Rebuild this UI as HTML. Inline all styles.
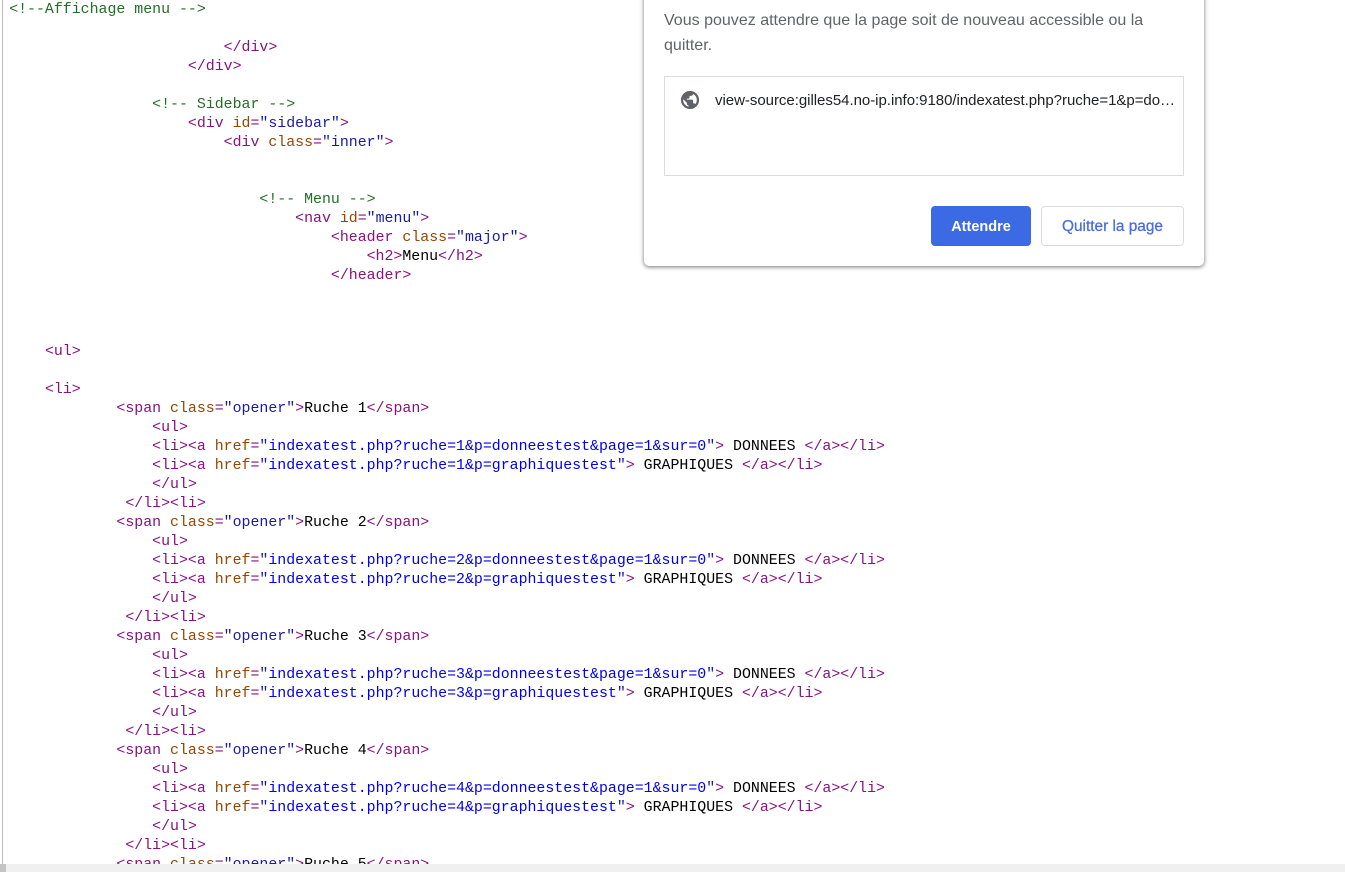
<!DOCTYPE html>
<html lang="fr">
<head>
<meta charset="utf-8">
<title>view-source</title>
<style>
html,body{margin:0;padding:0;width:1345px;height:872px;overflow:hidden;background:#fff}
#src{position:absolute;left:9.2px;top:1px;margin:0;font:14.9px/19px "Liberation Mono",monospace;color:#000;white-space:pre;}
.t{color:#881280}.a{color:#994500}.v{color:#1a1aa6}.c{color:#236e25}.l{color:#00e}
#gutter{position:absolute;left:2px;top:0;width:1px;height:864px;background:#bbb}
#sb{position:absolute;left:0;top:864px;width:1345px;height:8px;background:#f0f0f0}
#th{position:absolute;left:0;top:0;width:6px;height:8px;background:#c4c4c4}
#dlg{position:absolute;left:644px;top:-20px;width:560px;height:286px;background:#fff;border-radius:5px;box-shadow:0 1px 3px rgba(60,64,67,.55),0 1px 5px 1px rgba(60,64,67,.2);font-family:"Liberation Sans",sans-serif}
#msg{position:absolute;left:20px;top:28px;width:530px;font-size:16px;letter-spacing:.01px;line-height:25px;color:#5f6368;white-space:nowrap}
#box{position:absolute;left:20px;top:96px;width:518px;height:98px;border:1px solid #dadce0}
#box svg{position:absolute;left:16px;top:14px}
#url{position:absolute;left:50px;top:14px;width:465px;font-size:15px;line-height:20px;color:#202124;white-space:nowrap;overflow:hidden;letter-spacing:-.03px}
.b{position:absolute;top:226px;height:40px;box-sizing:border-box;border-radius:4px;font-size:14.5px;font-weight:bold;line-height:42px;text-align:center}
#w{left:287px;width:100px;background:#3c6ae4;color:#fff}
#q{left:397px;width:143px;border:1px solid #dadce0;line-height:40px;font-size:15.4px;color:#4a6ee0;font-weight:normal;-webkit-text-stroke:.3px #4a6ee0}
</style>
</head>
<body>
<pre id="src"><span class="c">&lt;!--Affichage menu --&gt;</span>

                        <span class="t">&lt;/div&gt;</span>
                    <span class="t">&lt;/div&gt;</span>

                <span class="c">&lt;!-- Sidebar --&gt;</span>
                    <span class="t">&lt;div <span class="a">id</span>=<span class="v">"sidebar"</span>&gt;</span>
                        <span class="t">&lt;div <span class="a">class</span>=<span class="v">"inner"</span>&gt;</span>


                            <span class="c">&lt;!-- Menu --&gt;</span>
                                <span class="t">&lt;nav <span class="a">id</span>=<span class="v">"menu"</span>&gt;</span>
                                    <span class="t">&lt;header <span class="a">class</span>=<span class="v">"major"</span>&gt;</span>
                                        <span class="t">&lt;h2&gt;</span>Menu<span class="t">&lt;/h2&gt;</span>
                                    <span class="t">&lt;/header&gt;</span>



    <span class="t">&lt;ul&gt;</span>

    <span class="t">&lt;li&gt;</span>
            <span class="t">&lt;span <span class="a">class</span>=<span class="v">"opener"</span>&gt;</span>Ruche 1<span class="t">&lt;/span&gt;</span>
                <span class="t">&lt;ul&gt;</span>
                <span class="t">&lt;li&gt;</span><span class="t">&lt;a <span class="a">href</span>=<span class="v">"<span class="l">indexatest.php?ruche=1&amp;p=donneestest&amp;page=1&amp;sur=0</span>"</span>&gt;</span> DONNEES <span class="t">&lt;/a&gt;</span><span class="t">&lt;/li&gt;</span>
                <span class="t">&lt;li&gt;</span><span class="t">&lt;a <span class="a">href</span>=<span class="v">"<span class="l">indexatest.php?ruche=1&amp;p=graphiquestest</span>"</span>&gt;</span> GRAPHIQUES <span class="t">&lt;/a&gt;</span><span class="t">&lt;/li&gt;</span>
                <span class="t">&lt;/ul&gt;</span>
             <span class="t">&lt;/li&gt;</span><span class="t">&lt;li&gt;</span>
            <span class="t">&lt;span <span class="a">class</span>=<span class="v">"opener"</span>&gt;</span>Ruche 2<span class="t">&lt;/span&gt;</span>
                <span class="t">&lt;ul&gt;</span>
                <span class="t">&lt;li&gt;</span><span class="t">&lt;a <span class="a">href</span>=<span class="v">"<span class="l">indexatest.php?ruche=2&amp;p=donneestest&amp;page=1&amp;sur=0</span>"</span>&gt;</span> DONNEES <span class="t">&lt;/a&gt;</span><span class="t">&lt;/li&gt;</span>
                <span class="t">&lt;li&gt;</span><span class="t">&lt;a <span class="a">href</span>=<span class="v">"<span class="l">indexatest.php?ruche=2&amp;p=graphiquestest</span>"</span>&gt;</span> GRAPHIQUES <span class="t">&lt;/a&gt;</span><span class="t">&lt;/li&gt;</span>
                <span class="t">&lt;/ul&gt;</span>
             <span class="t">&lt;/li&gt;</span><span class="t">&lt;li&gt;</span>
            <span class="t">&lt;span <span class="a">class</span>=<span class="v">"opener"</span>&gt;</span>Ruche 3<span class="t">&lt;/span&gt;</span>
                <span class="t">&lt;ul&gt;</span>
                <span class="t">&lt;li&gt;</span><span class="t">&lt;a <span class="a">href</span>=<span class="v">"<span class="l">indexatest.php?ruche=3&amp;p=donneestest&amp;page=1&amp;sur=0</span>"</span>&gt;</span> DONNEES <span class="t">&lt;/a&gt;</span><span class="t">&lt;/li&gt;</span>
                <span class="t">&lt;li&gt;</span><span class="t">&lt;a <span class="a">href</span>=<span class="v">"<span class="l">indexatest.php?ruche=3&amp;p=graphiquestest</span>"</span>&gt;</span> GRAPHIQUES <span class="t">&lt;/a&gt;</span><span class="t">&lt;/li&gt;</span>
                <span class="t">&lt;/ul&gt;</span>
             <span class="t">&lt;/li&gt;</span><span class="t">&lt;li&gt;</span>
            <span class="t">&lt;span <span class="a">class</span>=<span class="v">"opener"</span>&gt;</span>Ruche 4<span class="t">&lt;/span&gt;</span>
                <span class="t">&lt;ul&gt;</span>
                <span class="t">&lt;li&gt;</span><span class="t">&lt;a <span class="a">href</span>=<span class="v">"<span class="l">indexatest.php?ruche=4&amp;p=donneestest&amp;page=1&amp;sur=0</span>"</span>&gt;</span> DONNEES <span class="t">&lt;/a&gt;</span><span class="t">&lt;/li&gt;</span>
                <span class="t">&lt;li&gt;</span><span class="t">&lt;a <span class="a">href</span>=<span class="v">"<span class="l">indexatest.php?ruche=4&amp;p=graphiquestest</span>"</span>&gt;</span> GRAPHIQUES <span class="t">&lt;/a&gt;</span><span class="t">&lt;/li&gt;</span>
                <span class="t">&lt;/ul&gt;</span>
             <span class="t">&lt;/li&gt;</span><span class="t">&lt;li&gt;</span>
            <span class="t">&lt;span <span class="a">class</span>=<span class="v">"opener"</span>&gt;</span>Ruche 5<span class="t">&lt;/span&gt;</span></pre>
<div id="gutter"></div>
<div id="sb"><div id="th"></div></div>
<div id="dlg">
  <div id="msg">Vous pouvez attendre que la page soit de nouveau accessible ou la<br>quitter.</div>
  <div id="box">
    <svg width="18" height="18" viewBox="2 2 20 20"><path fill="#5f6368" stroke="#5f6368" stroke-width=".9" fill-rule="evenodd" d="M12 2.4C6.7 2.4 2.4 6.7 2.4 12s4.300 9.600 9.600 9.600 9.600-4.300 9.600-9.600S17.300 2.400 12 2.400zm-1 17.530c-3.950-.49-7-3.850-7-7.930 0-.62.08-1.210.21-1.790L9 15v1c0 1.100.9 2 2 2v1.930zm6.900-2.540c-.26-.81-1-1.390-1.900-1.390h-1v-3c0-.55-.45-1-1-1H8v-2h2c.55 0 1-.45 1-1V7h2c1.100 0 2-.9 2-2v-.41c2.930 1.190 5 4.060 5 7.410 0 2.080-.8 3.970-2.100 5.390z"/></svg>
    <div id="url">view-source:gilles54.no-ip.info:9180/indexatest.php?ruche=1&amp;p=do…</div>
  </div>
  <div class="b" id="w">Attendre</div>
  <div class="b" id="q">Quitter la page</div>
</div>
</body>
</html>
